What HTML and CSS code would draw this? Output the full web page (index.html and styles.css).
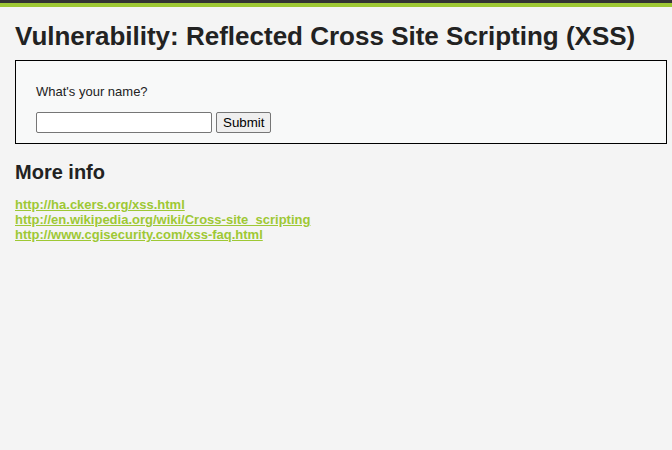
FILE: index.html
```html
<!DOCTYPE html>
<html>
<head>
<meta charset="utf-8">
<title>Vulnerability: Reflected Cross Site Scripting (XSS)</title>
<link rel="stylesheet" href="styles.css">
</head>
<body>
<div class="topbar"></div>
<div class="body_padded">
  <h1>Vulnerability: Reflected Cross Site Scripting (XSS)</h1>
  <div class="vulnerable_code_area">
    <form class="xss-form">
      <p class="label">What's your name?</p>
      <div class="row">
        <input type="text" class="name-input" name="name">
        <button type="button" class="submit">Submit</button>
      </div>
    </form>
  </div>
  <h2>More info</h2>
  <ul class="links">
    <li><a href="#">http://ha.ckers.org/xss.html</a></li>
    <li><a href="#">http://en.wikipedia.org/wiki/Cross-site_scripting</a></li>
    <li><a href="#">http://www.cgisecurity.com/xss-faq.html</a></li>
  </ul>
</div>
</body>
</html>
```
FILE: styles.css
```css
html, body {
  margin: 0;
  padding: 0;
  background: #f4f4f4;
  font-family: "Liberation Sans", Arial, sans-serif;
  color: #222;
}
.topbar {
  height: 3px;
  background: #333;
  border-bottom: 4px solid #9ec834;
}
.body_padded {
  padding: 0 5px 0 15px;
}
h1 {
  margin: 0;
  padding-top: 14px;
  font-size: 26px;
  line-height: 30px;
  font-weight: bold;
  color: #222;
}
.vulnerable_code_area {
  margin-top: 9px;
  border: 1px solid #000;
  background: #f8f9f9;
  padding: 22px 20px 10px 20px;
}
.xss-form { margin: 0; }
.label {
  margin: 0 0 12px 0;
  font-size: 13px;
  line-height: 17px;
  color: #222;
}
.row {
  display: flex;
  gap: 4px;
  align-items: center;
}
.name-input {
  width: 176px;
  height: 21px;
  box-sizing: border-box;
  border: 1px solid #767676;
  border-radius: 2px;
  background: #fff;
  margin: 0;
  padding: 1px 2px;
}
.submit {
  height: 21px;
  box-sizing: border-box;
  margin: 0;
  padding: 1px 6px;
  font-family: "Liberation Sans", Arial, sans-serif;
  font-size: 13.33px;
  color: #000;
  background: #efefef;
  border: 1px solid #767676;
  border-radius: 2px;
}
h2 {
  margin: 16px 0 0 0;
  font-size: 20px;
  line-height: 24px;
  font-weight: bold;
  color: #222;
}
.links {
  list-style: none;
  margin: 13px 0 0 0;
  padding: 0;
}
.links li {
  font-size: 13px;
  line-height: 15px;
}
.links a {
  color: #9ec834;
  font-weight: bold;
  text-decoration: underline;
}
```
